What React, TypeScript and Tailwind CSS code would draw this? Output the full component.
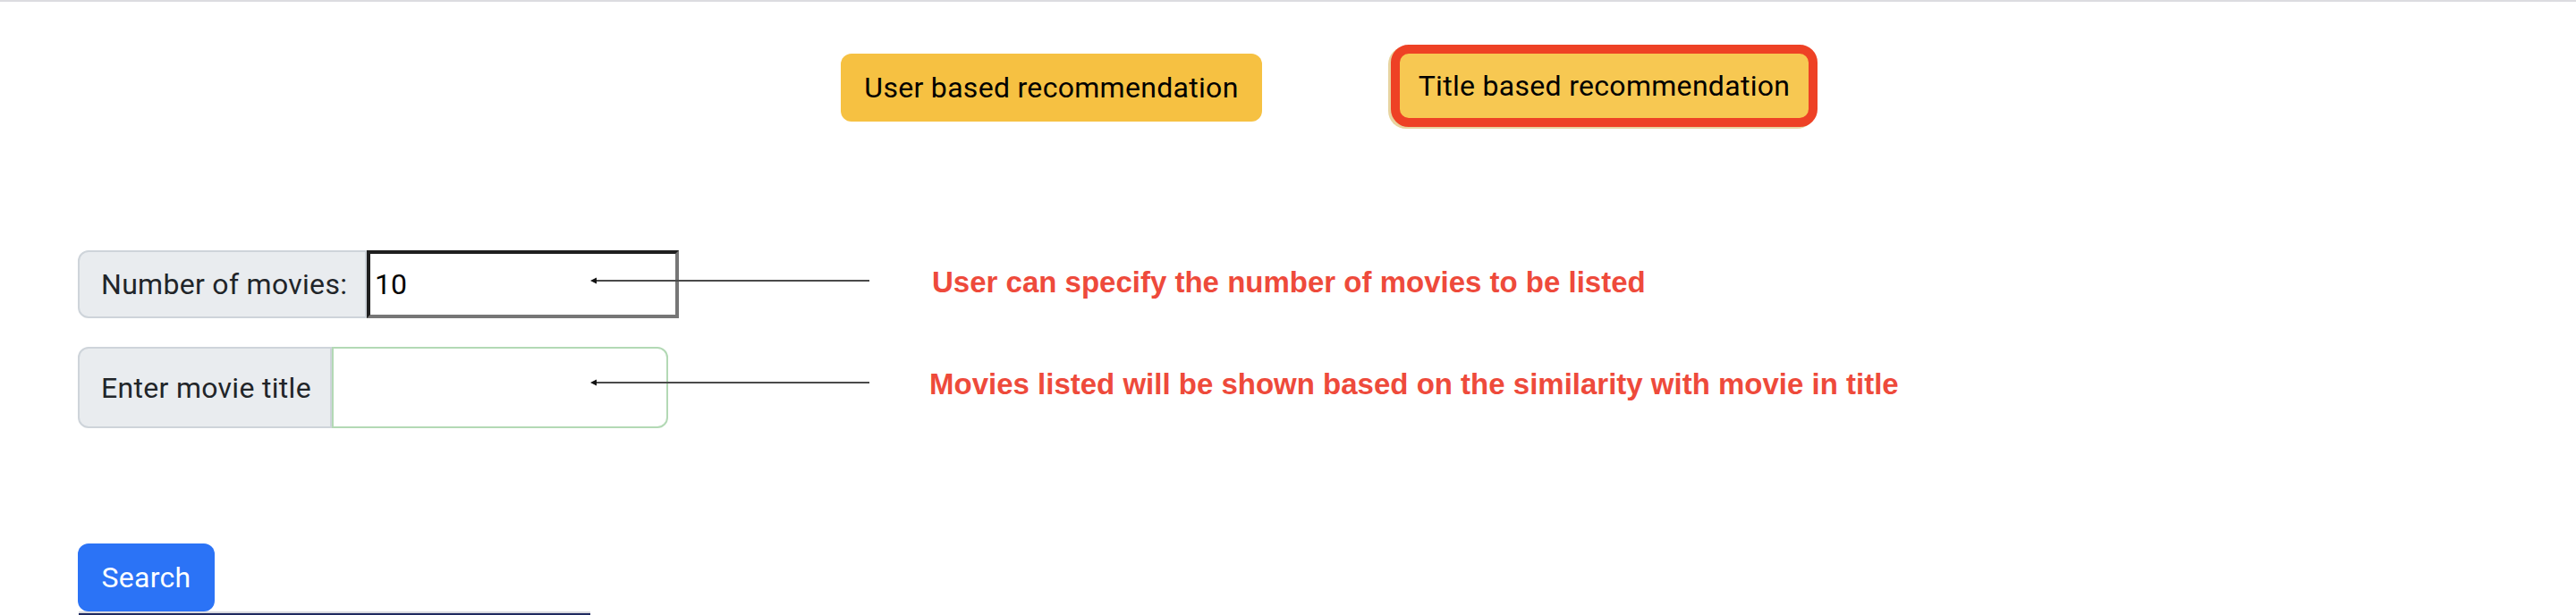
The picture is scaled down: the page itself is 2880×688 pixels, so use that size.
import { useState } from "react";

const sysFont = "font-['Roboto','Liberation_Sans',sans-serif]";

function Arrow({ top }: { top: number }) {
  // thin leader line with a tiny arrow head pointing at the input
  return (
    <svg
      className="absolute left-[655px] pointer-events-none"
      style={{ top }}
      width="320"
      height="12"
      viewBox="0 0 320 12"
    >
      <line x1="10" y1="6" x2="317" y2="6" stroke="#4a4a4a" strokeWidth="2" />
      <polygon points="5,6 12,2.5 12,9.5" fill="#111" />
    </svg>
  );
}

export default function App() {
  const [count, setCount] = useState("10");
  const [title, setTitle] = useState("");

  return (
    <div className={`relative min-h-[688px] w-full bg-white border-t-2 border-[#dcdce0] ${sysFont} text-[#212529]`}>
      {/* mode buttons */}
      <div className="flex items-start pl-[940px] pt-[48px] gap-[144px]">
        <button
          type="button"
          className="mt-[10px] h-[76px] w-[471px] whitespace-nowrap rounded-[12px] bg-[#f6c142] text-[32px] leading-[48px] tracking-[0.3px] text-black"
        >
          User based recommendation
        </button>
        <button
          type="button"
          className="h-[92px] w-[477px] whitespace-nowrap rounded-[20px] border-[10px] border-[#ee4125] bg-[#f7c852] text-[32px] leading-[48px] tracking-[0.3px] text-black shadow-[-3px_2px_0_0_#e8d4a0]"
        >
          Title based recommendation
        </button>
      </div>

      {/* inputs */}
      <div className="flex flex-col pl-[87px] mt-[138px]">
        <div className="flex h-[76px]">
          <span className="flex w-[323px] items-center whitespace-nowrap rounded-l-[12px] border-2 border-[#ced4da] bg-[#e9ecef] px-[24px] text-[32px] tracking-[0.3px]">
            Number of movies:
          </span>
          <input
            value={count}
            onChange={e => setCount(e.target.value)}
            className="w-[349px] border-4 border-t-[#1f1f1f] border-l-[#1f1f1f] border-r-[#767676] border-b-[#767676] bg-white px-[5px] text-[32px] text-black outline-none"
          />
        </div>
        <div className="flex h-[91px] mt-[32px]">
          <span className="flex w-[284px] items-center whitespace-nowrap rounded-l-[12px] border-2 border-[#ced4da] bg-[#e9ecef] px-[24px] text-[32px] tracking-[0.3px]">
            Enter movie title
          </span>
          <input
            value={title}
            onChange={e => setTitle(e.target.value)}
            className="w-[376px] rounded-r-[12px] border-2 border-[#b3d9b5] bg-white px-[24px] text-[32px] outline-none"
          />
        </div>

        <button
          type="button"
          className="mt-[129px] h-[76px] w-[153px] rounded-[12px] bg-[#2b73f6] text-[32px] leading-[48px] tracking-[0.3px] text-white"
        >
          Search
        </button>
        <div className="ml-px h-[4px] w-[572px] border-t-2 border-b-2 border-t-[#d9d9df] border-b-[#1f2a60]" />
      </div>

      {/* annotations */}
      <Arrow top={306} />
      <Arrow top={420} />
      <p className="absolute left-[1042px] top-[297px] font-['Liberation_Sans',Arial,sans-serif] text-[33px] font-bold leading-[33px] text-[#ee4a3b] whitespace-nowrap">
        User can specify the number of movies to be listed
      </p>
      <p className="absolute left-[1039px] top-[411px] font-['Liberation_Sans',Arial,sans-serif] text-[33px] font-bold leading-[33px] text-[#ee4a3b] whitespace-nowrap">
        Movies listed will be shown based on the similarity with movie in title
      </p>
    </div>
  );
}
